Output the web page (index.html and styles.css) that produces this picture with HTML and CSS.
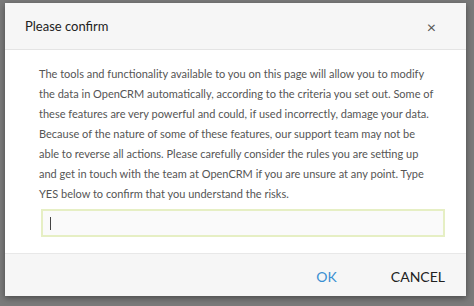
FILE: index.html
```html
<!DOCTYPE html>
<html lang="en">
<head>
    <meta charset="UTF-8">
    <title>Please confirm</title>
    <link rel="stylesheet" href="styles.css">
</head>
<body>
    <div class="dialog">
        <div class="dialog-header">
            <h2>Please confirm</h2>
            <span class="close">&times;</span>
        </div>
        <div class="dialog-body">
            <p>The tools and functionality available to you on this page will allow you to modify<br>
            the data in OpenCRM automatically, according to the criteria you set out. Some of<br>
            these features are very powerful and could, if used incorrectly, damage your data.<br>
            Because of the nature of some of these features, our support team may not be<br>
            able to reverse all actions. Please carefully consider the rules you are setting up<br>
            and get in touch with the team at OpenCRM if you are unsure at any point. Type<br>
            YES below to confirm that you understand the risks.</p>
            <div class="confirm-input"><span class="caret"></span></div>
        </div>
        <div class="dialog-footer">
            <button class="btn ok">OK</button>
            <button class="btn cancel">CANCEL</button>
        </div>
    </div>
</body>
</html>
```

FILE: styles.css
```css
body {
    margin: 0;
    background: #7a7a7a;
    font-family: 'Lato', sans-serif;
    height: 306px;
    overflow: hidden;
}

.dialog {
    margin: 3px 0 0 5px;
    width: 461px;
    height: 293px;
    background: #fff;
    box-shadow: 0 2px 6px rgba(0, 0, 0, 0.4);
    display: flex;
    flex-direction: column;
}

.dialog-header {
    height: 47px;
    background: #f6f6f6;
    border-bottom: 1px solid #e4e4e4;
    display: flex;
    align-items: center;
    justify-content: space-between;
    padding: 0 30px 0 20px;
    box-sizing: border-box;
}

.dialog-header h2 {
    margin: 0;
    font-size: 13px;
    font-weight: 400;
    color: #222;
}

.close {
    font-size: 16px;
    color: #555;
}

.dialog-body {
    flex: 1;
    padding: 14px 21px 0 34px;
}

.dialog-body p {
    margin: 0;
    font-size: 11px;
    line-height: 20px;
    color: #555;
    white-space: nowrap;
}

.confirm-input {
    margin: 5px 0 0 2px;
    height: 28px;
    border: 2px solid #e6efc4;
    background: #fafafa;
    box-sizing: border-box;
    display: flex;
    align-items: center;
    padding-left: 7px;
}

.caret {
    width: 1px;
    height: 13px;
    background: #444;
}

.dialog-footer {
    height: 43px;
    background: #f6f6f6;
    border-top: 1px solid #e8e8e8;
    display: flex;
    justify-content: flex-end;
    align-items: center;
    gap: 54px;
    padding: 2px 21px 0 0;
    box-sizing: border-box;
}

.btn {
    border: 0;
    background: none;
    font-family: 'Lato', sans-serif;
    font-size: 14px;
    padding: 0;
}

.ok { color: #3a8fd2; }
.cancel { color: #222; }
```
